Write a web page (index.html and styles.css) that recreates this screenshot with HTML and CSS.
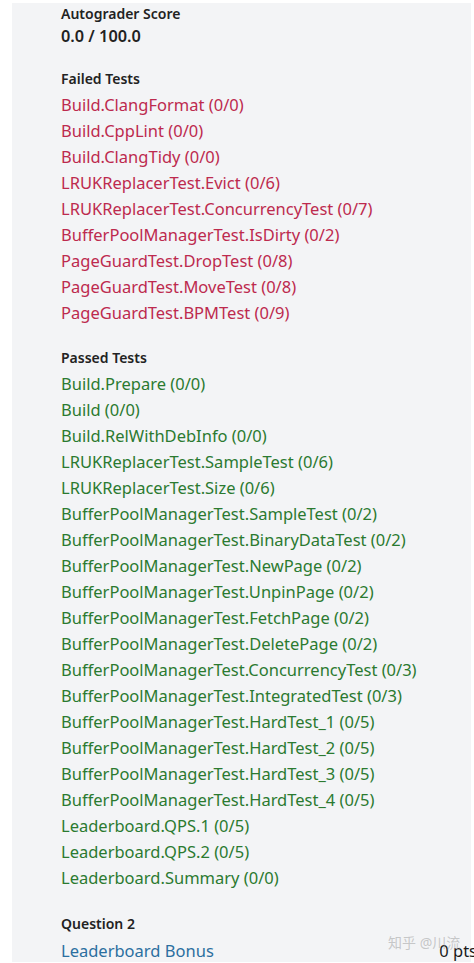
FILE: index.html
```html
<!DOCTYPE html>
<html lang="en">
<head>
<meta charset="utf-8">
<title>Autograder Results</title>
<link rel="stylesheet" href="styles.css">
</head>
<body>
<div class="page">
  <div class="panel">
    <section class="score">
      <div class="score-label">Autograder Score</div>
      <div class="score-value">0.0 / 100.0</div>
    </section>

    <section class="group">
      <div class="group-title">Failed Tests</div>
      <ul class="tests failed">
        <li>Build.ClangFormat (0/0)</li>
        <li>Build.CppLint (0/0)</li>
        <li>Build.ClangTidy (0/0)</li>
        <li>LRUKReplacerTest.Evict (0/6)</li>
        <li>LRUKReplacerTest.ConcurrencyTest (0/7)</li>
        <li>BufferPoolManagerTest.IsDirty (0/2)</li>
        <li>PageGuardTest.DropTest (0/8)</li>
        <li>PageGuardTest.MoveTest (0/8)</li>
        <li>PageGuardTest.BPMTest (0/9)</li>
      </ul>
    </section>

    <section class="group">
      <div class="group-title">Passed Tests</div>
      <ul class="tests passed">
        <li>Build.Prepare (0/0)</li>
        <li>Build (0/0)</li>
        <li>Build.RelWithDebInfo (0/0)</li>
        <li>LRUKReplacerTest.SampleTest (0/6)</li>
        <li>LRUKReplacerTest.Size (0/6)</li>
        <li>BufferPoolManagerTest.SampleTest (0/2)</li>
        <li>BufferPoolManagerTest.BinaryDataTest (0/2)</li>
        <li>BufferPoolManagerTest.NewPage (0/2)</li>
        <li>BufferPoolManagerTest.UnpinPage (0/2)</li>
        <li>BufferPoolManagerTest.FetchPage (0/2)</li>
        <li>BufferPoolManagerTest.DeletePage (0/2)</li>
        <li>BufferPoolManagerTest.ConcurrencyTest (0/3)</li>
        <li>BufferPoolManagerTest.IntegratedTest (0/3)</li>
        <li>BufferPoolManagerTest.HardTest_1 (0/5)</li>
        <li>BufferPoolManagerTest.HardTest_2 (0/5)</li>
        <li>BufferPoolManagerTest.HardTest_3 (0/5)</li>
        <li>BufferPoolManagerTest.HardTest_4 (0/5)</li>
        <li>Leaderboard.QPS.1 (0/5)</li>
        <li>Leaderboard.QPS.2 (0/5)</li>
        <li>Leaderboard.Summary (0/0)</li>
      </ul>
    </section>

    <section class="group group-question">
      <div class="group-title">Question 2</div>
      <div class="question-row">
        <span class="question-link">Leaderboard Bonus</span>
        <span class="question-pts">0 pts</span>
      </div>
    </section>
  </div>
  <div class="watermark">知乎 @川流</div>
</div>
</body>
</html>
```

FILE: styles.css
```css
html, body {
  margin: 0;
  padding: 0;
  overflow: hidden;
  background: #ffffff;
}

body {
  font-family: "Noto Sans", "Open Sans", "Noto Sans CJK SC", sans-serif;
  color: #222222;
}

.page {
  position: relative;
  padding: 3px 0 0 12px;
  height: 960px;
}

.panel {
  width: 410px;
  padding: 0 0 0 49px;
  background: #f3f4f6;
  height: 959px;
}

.score-label {
  font-size: 14px;
  font-weight: 600;
  line-height: 22px;
}

.score-value {
  font-size: 16.3px;
  font-weight: 600;
  line-height: 22px;
}

.group {
  margin-top: 19px;
}

.group-question {
  margin-top: 20px;
}

.group-title {
  font-size: 14px;
  font-weight: 600;
  line-height: 26px;
}

.tests {
  list-style: none;
  margin: 0;
  padding: 0;
}

.tests li {
  font-size: 16.5px;
  line-height: 26px;
  white-space: nowrap;
}

.failed li {
  color: #bd2a4e;
}

.passed li {
  color: #2b7a30;
}

.question-row {
  display: flex;
  justify-content: space-between;
  margin-top: 1px;
  margin-right: -6px;
  font-size: 16.5px;
  line-height: 26px;
  white-space: nowrap;
}

.question-link {
  color: #2b6fa0;
}

.question-pts {
  color: #1a1a1a;
}

.watermark {
  position: absolute;
  left: 388px;
  top: 933px;
  font-size: 14px;
  line-height: 20px;
  color: rgba(160, 160, 160, 0.55);
  white-space: nowrap;
}
```
